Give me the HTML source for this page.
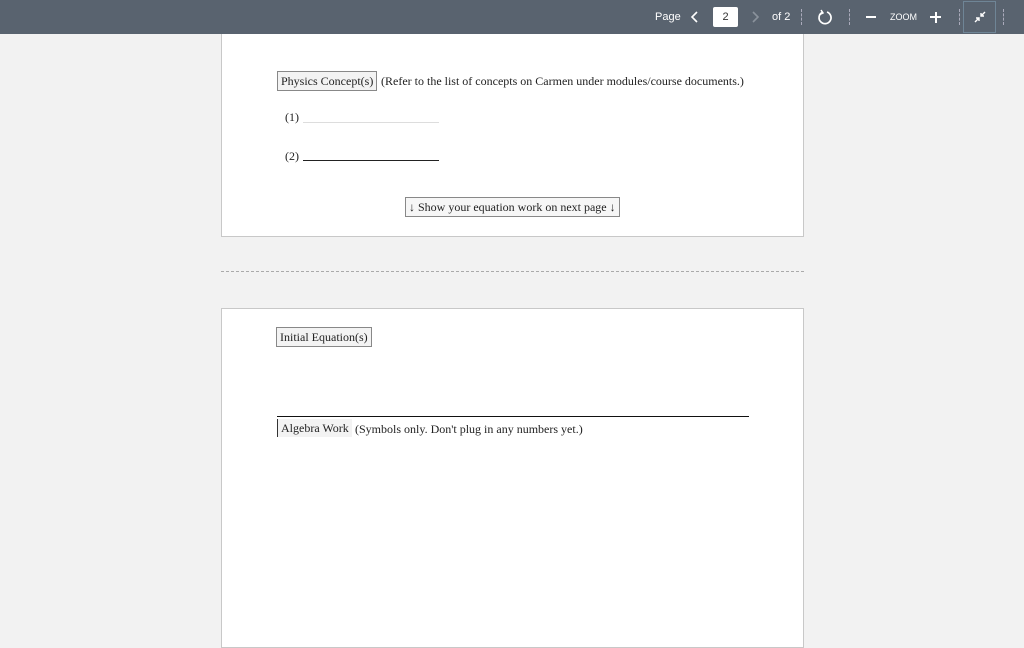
<!DOCTYPE html>
<html><head><meta charset="utf-8"><style>
*{margin:0;padding:0;box-sizing:border-box}
body{width:1024px;height:640px;overflow:hidden;background:#f2f2f2;position:relative;font-family:"Liberation Serif",serif;color:#222}
.tb{position:absolute;left:0;top:0;width:1024px;height:34px;background:#59636f;color:#fff;font-family:"Liberation Sans",sans-serif;font-size:11px}
.tb span,.tb div{position:absolute}
.sep{width:0;border-left:1px dashed #aab;height:16px;top:9px}
.page{position:absolute;left:221px;width:583px;background:#fff;border:1px solid #c8c8c8}
.box{position:absolute;border:1px solid #888;background:#f3f3f3;font-size:12px;padding:2px 3px;white-space:nowrap;line-height:14px}
.t{position:absolute;font-size:12px;white-space:nowrap;line-height:14px}
</style></head><body>
<div class="tb">
<span style="left:655px;top:11px">Page</span>
<svg style="position:absolute;left:690px;top:10px" width="10" height="14"><path d="M7 2 L2 7 L7 12" stroke="#fff" stroke-width="1.6" fill="none"/></svg>
<div style="left:713px;top:7px;width:25px;height:20px;background:#fff;border-radius:2px;color:#333;text-align:center;line-height:20px">2</div>
<svg style="position:absolute;left:750px;top:10px" width="10" height="14"><path d="M3 2 L8 7 L3 12" stroke="#8a929c" stroke-width="1.6" fill="none"/></svg>
<span style="left:772px;top:11px">of 2</span>
<div class="sep" style="left:801px"></div>
<svg style="position:absolute;left:817px;top:9px" width="16" height="16"><path d="M5 3.5 A6 6 0 1 0 10 3" stroke="#fff" stroke-width="1.7" fill="none"/><path d="M4 1 L6 4 L3 5.5" stroke="#fff" stroke-width="1.5" fill="none"/></svg>
<div class="sep" style="left:849px"></div>
<div style="left:866px;top:16px;width:10px;height:2px;background:#fff"></div>
<span style="left:890px;top:12px;font-size:9px">ZOOM</span>
<div style="left:930px;top:16px;width:11px;height:2px;background:#fff"></div>
<div style="left:934.5px;top:11.5px;width:2px;height:11px;background:#fff"></div>
<div class="sep" style="left:959px"></div>
<div style="left:963px;top:1px;width:33px;height:32px;border:1px solid #6f8596"></div>
<svg style="position:absolute;left:973px;top:10px" width="14" height="14"><path d="M2 12 L6 8 M3 8 H6 V11 M12 2 L8 6 M8 3 V6 H11" stroke="#fff" stroke-width="1.4" fill="none"/></svg>
<div class="sep" style="left:1003px"></div>
</div>

<div class="page" style="top:34px;height:203px;border-top:none">
<div class="box" style="left:55px;top:37px">Physics Concept(s)</div>
<div class="t" style="left:159px;top:40px">(Refer to the list of concepts on Carmen under modules/course documents.)</div>
<div class="t" style="left:63px;top:76px">(1)</div>
<div style="position:absolute;left:81px;top:88px;width:136px;border-top:1px solid #ddd"></div>
<div class="t" style="left:63px;top:115px">(2)</div>
<div style="position:absolute;left:81px;top:126px;width:136px;border-top:1px solid #222"></div>
<div class="box" style="left:183px;top:163px;background:#f6f6f6">↓ Show your equation work on next page ↓</div>
</div>

<div style="position:absolute;left:221px;top:271px;width:583px;border-top:1px dashed #aaa"></div>

<div class="page" style="top:308px;height:340px">
<div class="box" style="left:54px;top:18px">Initial Equation(s)</div>
<div style="position:absolute;left:55px;top:107px;width:472px;border-top:1px solid #111"></div>
<div class="box" style="left:55px;top:110px;border:none;border-left:1px solid #333;background:#f3f3f3">Algebra Work</div>
<div class="t" style="left:133px;top:113px">(Symbols only. Don't plug in any numbers yet.)</div>
</div>
</body></html>
